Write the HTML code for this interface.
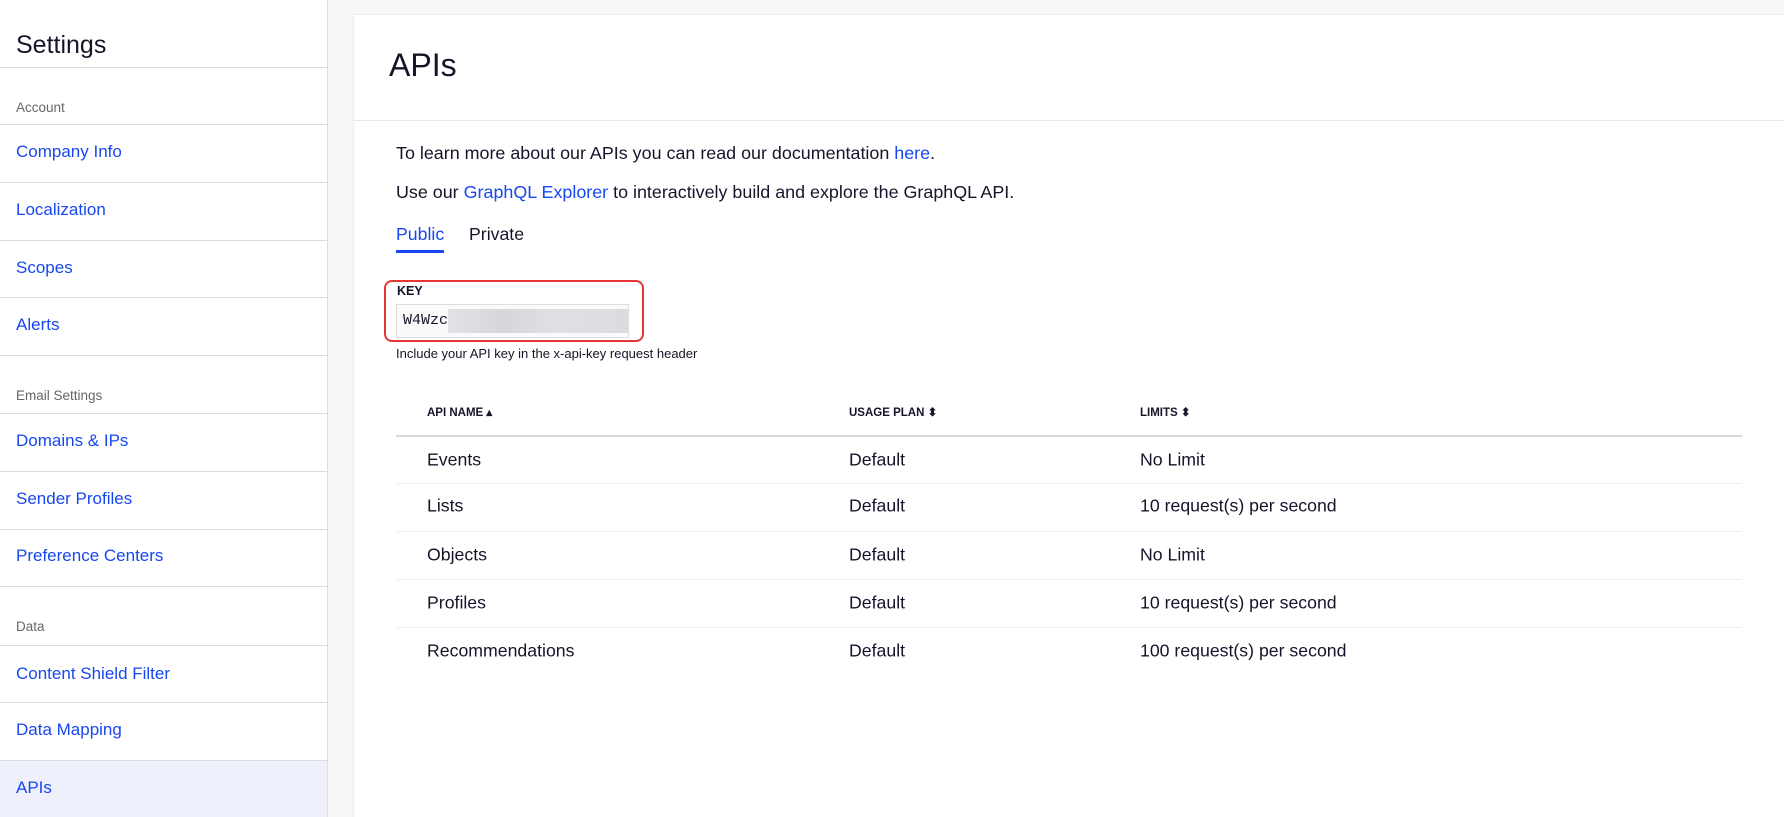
<!DOCTYPE html>
<html><head><meta charset="utf-8"><style>
*{box-sizing:border-box;margin:0;padding:0}
body{width:1784px;height:817px;overflow:hidden;background:#f7f7f8;font-family:"Liberation Sans",sans-serif;color:#15152a;position:relative}
.side{position:absolute;left:0;top:0;width:328px;height:817px;background:#fff;border-right:1px solid #ddd}
.side .t{position:absolute;left:16px;font-size:17px}
.side .h{position:absolute;left:16px;font-size:13.5px;color:#666}
.side .l{position:absolute;left:0;width:327px;height:1px;background:#dcdcdc}
a,.lk{color:#1747f0;text-decoration:none}
.card{position:absolute;left:353px;top:14px;width:1431px;height:803px;background:#fff;border-left:1px solid #eee;border-top:1px solid #eee}
.abs{position:absolute}
.row{position:absolute;left:42px;width:1346px;height:1px;background:#eee}
.c{position:absolute;font-size:17.7px;transform:translateY(-50%)}
.th{position:absolute;font-size:11.5px;font-weight:bold;transform:translateY(-50%)}
</style></head><body>
<div class="side">
<div class="abs" style="left:16px;top:31px;font-size:25px">Settings</div>
<div class="l" style="top:67px"></div>
<div class="h" style="top:100px">Account</div>
<div class="l" style="top:124px"></div>
<div class="t lk" style="top:142px">Company Info</div>
<div class="l" style="top:182px"></div>
<div class="t lk" style="top:200px">Localization</div>
<div class="l" style="top:240px"></div>
<div class="t lk" style="top:258px">Scopes</div>
<div class="l" style="top:297px"></div>
<div class="t lk" style="top:315px">Alerts</div>
<div class="l" style="top:355px"></div>
<div class="h" style="top:388px">Email Settings</div>
<div class="l" style="top:413px"></div>
<div class="t lk" style="top:431px">Domains &amp; IPs</div>
<div class="l" style="top:471px"></div>
<div class="t lk" style="top:489px">Sender Profiles</div>
<div class="l" style="top:529px"></div>
<div class="t lk" style="top:546px">Preference Centers</div>
<div class="l" style="top:586px"></div>
<div class="h" style="top:619px">Data</div>
<div class="l" style="top:645px"></div>
<div class="t lk" style="top:664px">Content Shield Filter</div>
<div class="l" style="top:702px"></div>
<div class="t lk" style="top:720px">Data Mapping</div>
<div class="l" style="top:760px"></div>
<div class="abs" style="left:0;top:761px;width:327px;height:56px;background:#eef0fb"></div>
<div class="t lk" style="top:778px">APIs</div>
</div>
<div class="card">
<div class="abs" style="left:35px;top:32px;font-size:32px">APIs</div>
<div class="abs" style="left:0;top:105px;width:1431px;height:1px;background:#e8e8e8"></div>
<div class="abs" style="left:42px;top:128px;font-size:17.9px">To learn more about our APIs you can read our documentation <span class="lk">here</span>.</div>
<div class="abs" style="left:42px;top:167px;font-size:17.9px">Use our <span class="lk">GraphQL Explorer</span> to interactively build and explore the GraphQL API.</div>
<div class="abs lk" style="left:42px;top:209px;font-size:17.7px">Public</div>
<div class="abs" style="left:115px;top:209px;font-size:17.7px">Private</div>
<div class="abs" style="left:42px;top:235px;width:48px;height:3px;background:#1747f0"></div>
<div class="abs" style="left:30px;top:265px;width:260px;height:62px;border:2.5px solid #e53535;border-radius:8px"></div>
<div class="abs" style="left:43px;top:269px;font-size:12.5px;font-weight:bold">KEY</div>
<div class="abs" style="left:42px;top:289px;width:233px;height:34px;border:1px solid #ddd;background:#fafafa"></div>
<div class="abs" style="left:49px;top:297px;font-family:'Liberation Mono',monospace;font-size:15px">W4Wzc</div>
<div class="abs" style="left:94px;top:294px;width:180px;height:24px;background:linear-gradient(90deg,#e2e2e6,#d6d6dc 30%,#e0e0e4 60%,#dcdce0)"></div>
<div class="abs" style="left:42px;top:331px;font-size:13px">Include your API key in the x-api-key request header</div>
<div class="th" style="left:73px;top:397px">API NAME ▴</div>
<div class="th" style="left:495px;top:397px">USAGE PLAN ⬍</div>
<div class="th" style="left:786px;top:397px">LIMITS ⬍</div>
<div class="row" style="top:420px;height:2px;background:#d8d8d8"></div>
<div class="c" style="left:73px;top:445px">Events</div><div class="c" style="left:495px;top:445px">Default</div><div class="c" style="left:786px;top:445px">No Limit</div>
<div class="row" style="top:468px"></div>
<div class="c" style="left:73px;top:491px">Lists</div><div class="c" style="left:495px;top:491px">Default</div><div class="c" style="left:786px;top:491px">10 request(s) per second</div>
<div class="row" style="top:516px"></div>
<div class="c" style="left:73px;top:540px">Objects</div><div class="c" style="left:495px;top:540px">Default</div><div class="c" style="left:786px;top:540px">No Limit</div>
<div class="row" style="top:564px"></div>
<div class="c" style="left:73px;top:588px">Profiles</div><div class="c" style="left:495px;top:588px">Default</div><div class="c" style="left:786px;top:588px">10 request(s) per second</div>
<div class="row" style="top:612px"></div>
<div class="c" style="left:73px;top:636px">Recommendations</div><div class="c" style="left:495px;top:636px">Default</div><div class="c" style="left:786px;top:636px">100 request(s) per second</div>
</div>
</body></html>
